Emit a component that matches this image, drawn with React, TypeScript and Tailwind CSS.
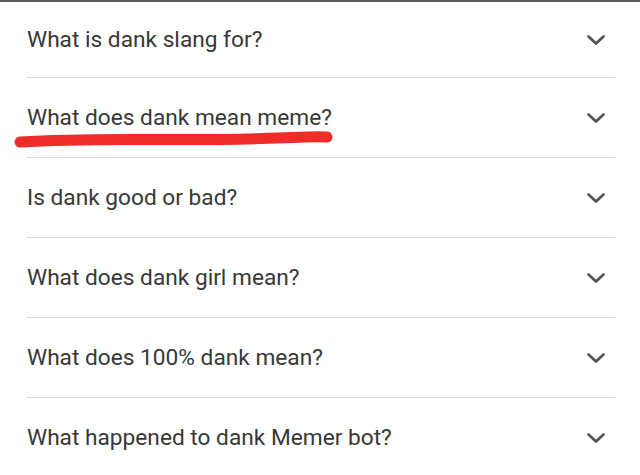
const questions = [
  'What is dank slang for?',
  'What does dank mean meme?',
  'Is dank good or bad?',
  'What does dank girl mean?',
  'What does 100% dank mean?',
  'What happened to dank Memer bot?',
];

function Chevron() {
  return (
    <svg width="20" height="12" viewBox="0 0 20 12" className="shrink-0">
      <path d="M2.5 2.5 L10 9.5 L17.5 2.5" fill="none" stroke="#555" strokeWidth="2.8" strokeLinecap="round" strokeLinejoin="round" />
    </svg>
  );
}

export default function App() {
  return (
    <div className="w-[640px] h-[475px] bg-white border-t-2 border-[#5a5a5a] overflow-hidden" style={{ fontFamily: 'Roboto, "Liberation Sans", sans-serif' }}>
      {questions.map((q, i) => (
        <div key={q} className={`relative ml-[26px] mr-[25px] flex items-center justify-between border-b border-[#dcdcdc] ${i === 0 ? 'h-[76px]' : 'h-[80px]'} ${i === questions.length - 1 ? 'border-transparent' : ''}`}>
          <span className="text-[22.7px] text-[#383838] pl-[1px] pt-[1px]">{q}</span>
          <div className="pr-[9px]">
            <Chevron />
          </div>
          {/* red marker scribble */}
          {i === 1 && (
            <svg className="absolute left-[-12px] top-[52px]" width="330" height="22" viewBox="0 0 330 22">
              <path d="M6 12 C 80 7, 160 11, 230 9 S 300 6, 313 7" fill="none" stroke="#ee2d2a" strokeWidth="11" strokeLinecap="round" />
            </svg>
          )}
        </div>
      ))}
    </div>
  );
}
